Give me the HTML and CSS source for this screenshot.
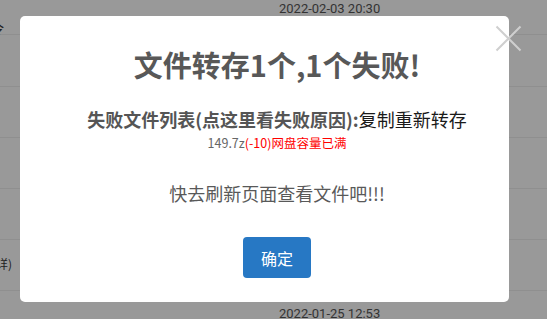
FILE: index.html
```html
<!DOCTYPE html>
<html lang="zh-CN">
<head>
<meta charset="utf-8">
<title>转存结果</title>
<link rel="stylesheet" href="styles.css">
</head>
<body>
<div class="bg">
  <div class="row r1"><span class="date">2022-02-03 20:30</span><span class="cut cut-top">令</span></div>
  <div class="row r2"></div>
  <div class="row"></div>
  <div class="row"></div>
  <div class="row"></div>
  <div class="row r6"><span class="cut">详)</span></div>
  <div class="row last"><span class="date">2022-01-25 12:53</span></div>
</div>

<div class="modal">
  <button class="close" aria-label="关闭">
    <svg width="27" height="27" viewBox="0 0 27 27"><path d="M1.5 1.5 L25.5 25.5 M25.5 1.5 L1.5 25.5" stroke="#cfcfcf" stroke-width="2" fill="none"/></svg>
  </button>
  <h1 class="title">文件转存1个,1个失败!</h1>
  <p class="list"><b class="list-head">失败文件列表(点这里看失败原因):</b><span class="retry">复制重新转存</span></p>
  <p class="fail"><span class="size">149.7z</span><span class="err">(-10)网盘容量已满</span></p>
  <p class="tip">快去刷新页面查看文件吧!!!</p>
  <button class="ok">确定</button>
</div>
</body>
</html>
```

FILE: styles.css
```css
html, body {
  margin: 0;
  padding: 0;
}
body {
  width: 547px;
  height: 319px;
  overflow: hidden;
  background: #999999;
  font-family: "Noto Sans CJK SC", "Noto Sans", sans-serif;
  position: relative;
}
.bg {
  display: flex;
  flex-direction: column;
  font-family: Roboto, "Noto Sans CJK SC", sans-serif;
  font-size: 13px;
  color: #333;
}
.row {
  height: 51px;
  border-bottom: 1px solid #8f8f8f;
  box-sizing: border-box;
  position: relative;
  display: flex;
  flex-direction: column;
}
.r1 { height: 35px; }
.r2 { height: 52px; }
.last { border-bottom: none; height: 40px; }
.date {
  display: block;
  padding-left: 279px;
  line-height: 18px;
}
.last .date { margin-top: 14px; }
.cut {
  display: block;
  margin-left: -9px;
  font-family: "Noto Sans CJK SC", sans-serif;
  font-size: 13px;
  line-height: 14px;
  color: #222;
}
.cut-top { margin-top: 3px; margin-left: -9px; }
.r6 .cut { margin-top: 17px; margin-left: -4px; font-size: 12px; }

.modal {
  position: absolute;
  left: 20px;
  top: 16px;
  width: 489px;
  height: 286px;
  background: #fff;
  border-radius: 5px;
  box-sizing: border-box;
  padding: 28px 0 0 25px;
  display: flex;
  flex-direction: column;
  align-items: center;
  text-align: center;
}
.close {
  position: absolute;
  left: 475px;
  top: 9px;
  width: 27px;
  height: 27px;
  padding: 0;
  border: 0;
  background: none;
  display: block;
}
.close svg { display: block; }
.title {
  margin: 0;
  font-size: 29px;
  line-height: 40px;
  font-weight: 700;
  color: #585858;
}
.list {
  margin: 23px 0 0;
  font-size: 18px;
  line-height: 24px;
  white-space: nowrap;
}
.list-head { color: #555; font-weight: 700; }
.retry { color: #1a1a1a; }
.fail {
  margin: 4px 0 0;
  font-size: 12.5px;
  line-height: 16px;
}
.size { color: #666; }
.err { color: #f00; }
.tip {
  margin: 30px 0 0;
  font-size: 18px;
  line-height: 24px;
  color: #595959;
}
.ok {
  margin-top: 32px;
  width: 68px;
  height: 41px;
  border: 0;
  border-radius: 4px;
  background: #2778c4;
  color: #fff;
  font-family: "Noto Sans CJK SC", sans-serif;
  font-size: 16px;
  padding: 0;
}
```
